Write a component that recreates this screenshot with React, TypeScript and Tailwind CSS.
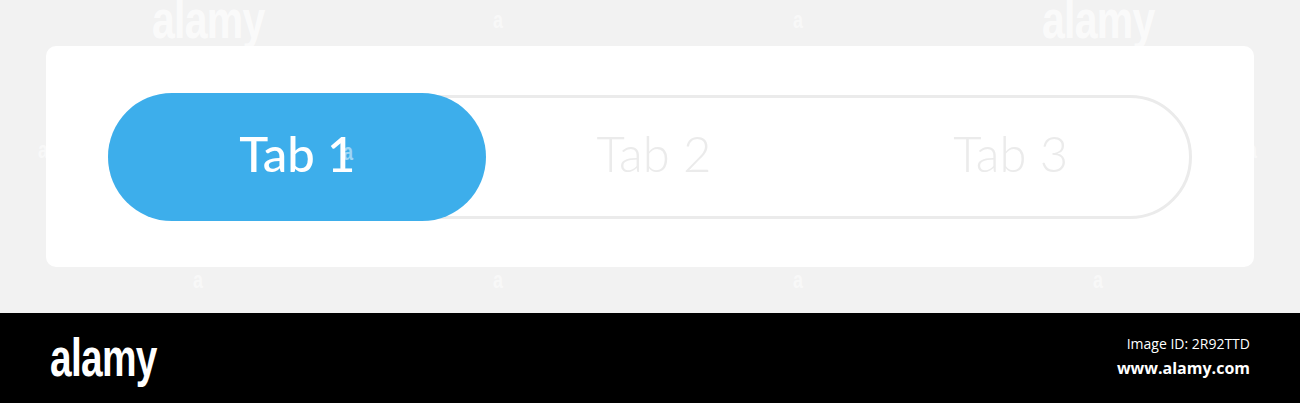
import React from "react";

const tabs = ["Tab 1", "Tab 2", "Tab 3"];

// small faint "a" stamps scattered over the page
const stamps: { left: number; top: number }[] = [
  { left: 493, top: 8 },
  { left: 793, top: 8 },
  { left: 38, top: 138 },
  { left: 343, top: 140 },
  { left: 1247, top: 138 },
  { left: 193, top: 268 },
  { left: 493, top: 268 },
  { left: 793, top: 268 },
  { left: 1093, top: 268 },
];

const logoFont = {
  fontFamily: '"Liberation Sans", Arial, sans-serif',
};

const Stamp = ({ left, top }: { left: number; top: number }) => (
  <span
    className="absolute inline-block origin-left scale-x-[0.75] text-[24px] font-bold leading-none text-white/50 select-none"
    style={{ left, top, ...logoFont }}
  >
    a
  </span>
);

const TabSwitch = ({ active = 0 }: { active?: number }) => {
  return (
    <div className="relative w-[1084px] h-[124px] rounded-full border-[3px] border-[#ebebeb]">
      {/* active pill sits over the track */}
      <div className="absolute left-[-3px] top-[-5px] w-[378px] h-[128px] rounded-full bg-[#3daeeb]" />
      <div className="relative grid grid-cols-3 h-full pl-[8px] pb-[6px]">
        {tabs.map((t, i) => (
          <button
            key={t}
            className={
              i === active
                ? "flex items-center justify-center text-[49px] font-medium text-white"
                : "flex items-center justify-center text-[49px] font-light text-[#ebebeb]"
            }
            style={{ fontFamily: 'Lato, "Open Sans", sans-serif' }}
          >
            {t}
          </button>
        ))}
      </div>
    </div>
  );
};

export default function App() {
  return (
    <div className="relative w-[1300px] h-[403px] overflow-hidden bg-[#f2f2f2] flex flex-col">
      <div className="flex-1 px-[46px] pt-[46px]">
        <div className="h-[221px] rounded-[10px] bg-white flex items-center px-[62px]">
          <TabSwitch active={0} />
        </div>
      </div>

      <div className="h-[90px] bg-black flex items-center justify-between pl-[50px] pr-[50px]">
        <span
          className="inline-block origin-left scale-x-[0.72] text-[54px] font-bold text-white tracking-[-1px] leading-none mb-[2px]"
          style={logoFont}
        >
          alamy
        </span>
        <div
          className="flex flex-col items-end text-white leading-none gap-[9px] pb-[4px]"
          style={{ fontFamily: '"Open Sans", "DejaVu Sans", sans-serif' }}
        >
          <span className="text-[14px]">Image ID: 2R92TTD</span>
          <span className="text-[16px] font-bold">www.alamy.com</span>
        </div>
      </div>

      {/* watermark overlay */}
      <span
        className="absolute left-[152px] top-[-8px] inline-block origin-left scale-x-[0.76] text-[54px] font-bold leading-none tracking-[-1px] text-white/70 select-none"
        style={logoFont}
      >
        alamy
      </span>
      <span
        className="absolute left-[1042px] top-[-8px] inline-block origin-left scale-x-[0.76] text-[54px] font-bold leading-none tracking-[-1px] text-white/70 select-none"
        style={logoFont}
      >
        alamy
      </span>
      {stamps.map((s, i) => (
        <Stamp key={i} left={s.left} top={s.top} />
      ))}
    </div>
  );
}
